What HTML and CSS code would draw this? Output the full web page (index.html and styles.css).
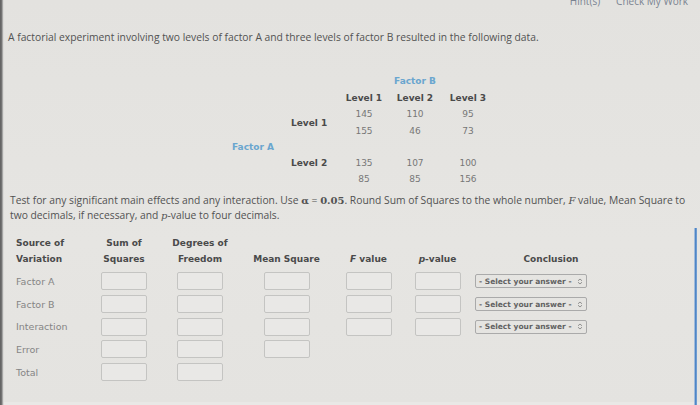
FILE: index.html
```html
<!DOCTYPE html>
<html>
<head>
<meta charset="utf-8">
<link rel="stylesheet" href="styles.css">
</head>
<body>
<div class="page">
  <div class="topbar"><span class="toplink">Hint(s)</span><span class="toplink">Check My Work</span></div>
  <p class="intro">A factorial experiment involving two levels of factor A and three levels of factor B resulted in the following data.</p>

  <div class="data">
    <div class="fb">Factor B</div>
    <div class="lh c3">Level 1</div>
    <div class="lh c4">Level 2</div>
    <div class="lh c5">Level 3</div>

    <div class="rl r1">Level 1</div>
    <div class="num c3 w3">145</div><div class="num c4 w3">110</div><div class="num c5 w3">95</div>
    <div class="num c3 w4">155</div><div class="num c4 w4">46</div><div class="num c5 w4">73</div>

    <div class="fa">Factor A</div>

    <div class="rl r2">Level 2</div>
    <div class="num c3 w6">135</div><div class="num c4 w6">107</div><div class="num c5 w6">100</div>
    <div class="num c3 w7">85</div><div class="num c4 w7">85</div><div class="num c5 w7">156</div>
  </div>

  <p class="instr">Test for any significant main effects and any interaction. Use <span class="m">α</span> = <span class="mb">0.05</span>. Round Sum of Squares to the whole number, <i class="mi">F</i> value, Mean Square to two decimals, if necessary, and <i class="mi">p</i>-value to four decimals.</p>

  <div class="anova">
    <div class="hd left">Source of<br>Variation</div>
    <div class="hd">Sum of<br>Squares</div>
    <div class="hd">Degrees of<br>Freedom</div>
    <div class="hd">Mean Square</div>
    <div class="hd"><i>F</i> value</div>
    <div class="hd"><i>p</i>-value</div>
    <div class="hd">Conclusion</div>

    <div class="lbl">Factor A</div>
    <div class="cell"><span class="box"></span></div>
    <div class="cell"><span class="box"></span></div>
    <div class="cell"><span class="box"></span></div>
    <div class="cell"><span class="box"></span></div>
    <div class="cell"><span class="box"></span></div>
    <div class="cell sel"><span class="select">- Select your answer - <svg width="6" height="7" viewBox="0 0 6 7"><path d="M1 2.8 L3 1 L5 2.8 M1 4.2 L3 6 L5 4.2" fill="none" stroke="#888" stroke-width="0.9"/></svg></span></div>

    <div class="lbl">Factor B</div>
    <div class="cell"><span class="box"></span></div>
    <div class="cell"><span class="box"></span></div>
    <div class="cell"><span class="box"></span></div>
    <div class="cell"><span class="box"></span></div>
    <div class="cell"><span class="box"></span></div>
    <div class="cell sel"><span class="select">- Select your answer - <svg width="6" height="7" viewBox="0 0 6 7"><path d="M1 2.8 L3 1 L5 2.8 M1 4.2 L3 6 L5 4.2" fill="none" stroke="#888" stroke-width="0.9"/></svg></span></div>

    <div class="lbl">Interaction</div>
    <div class="cell"><span class="box"></span></div>
    <div class="cell"><span class="box"></span></div>
    <div class="cell"><span class="box"></span></div>
    <div class="cell"><span class="box"></span></div>
    <div class="cell"><span class="box"></span></div>
    <div class="cell sel"><span class="select">- Select your answer - <svg width="6" height="7" viewBox="0 0 6 7"><path d="M1 2.8 L3 1 L5 2.8 M1 4.2 L3 6 L5 4.2" fill="none" stroke="#888" stroke-width="0.9"/></svg></span></div>

    <div class="lbl">Error</div>
    <div class="cell"><span class="box"></span></div>
    <div class="cell"><span class="box"></span></div>
    <div class="cell"><span class="box"></span></div>
    <div class="cell"></div><div class="cell"></div><div class="cell"></div>

    <div class="lbl">Total</div>
    <div class="cell"><span class="box"></span></div>
    <div class="cell"><span class="box"></span></div>
    <div class="cell"></div><div class="cell"></div><div class="cell"></div><div class="cell"></div>
  </div>
</div>
</body>
</html>
```

FILE: styles.css
```css
html, body {
  margin: 0;
  padding: 0;
  width: 700px;
  height: 405px;
  overflow: hidden;
}
body {
  background:
    linear-gradient(90deg, #5e5e5e 0, #7a7a7a 2px, #d0d0ce 3px, #e4e3e0 4px) no-repeat 0 0 / 4px 405px,
    linear-gradient(90deg, #c9d6e6, #4f86c6, #7ea6d6) no-repeat 694px 228px / 3px 177px,
    linear-gradient(#e9e8e6, #e9e8e6) no-repeat 0 402px / 700px 3px,
    linear-gradient(180deg, #e3e2df 0%, #e6e5e2 60%, #e4e3e0 100%);
  font-family: "DejaVu Sans", Verdana, sans-serif;
  color: #555;
}
.page {
  display: flex;
  flex-direction: column;
  height: 405px;
}
.topbar {
  display: flex;
  justify-content: flex-end;
  gap: 16px;
  height: 6px;
  margin-top: -4px;
  padding-right: 12px;
  font-family: "Open Sans", sans-serif;
  font-size: 10px;
  line-height: 10px;
  color: #7a8391;
}
.intro {
  margin: 28px 0 0 8px;
  font-family: "Open Sans", sans-serif;
  font-size: 10.3px;
  line-height: 14px;
  color: #525252;
}
.data {
  display: grid;
  margin: 29px 0 0 232px;
  grid-template-columns: 56px 52px 48px 54px 52px;
  grid-template-rows: 16.5px 16.5px 16.5px 16.5px 15.5px 16.5px 16.5px;
  align-items: center;
  font-size: 9px;
}
.fb {
  grid-column: 4;
  grid-row: 1;
  text-align: center;
  font-weight: bold;
  color: #6aa6cf;
}
.fa {
  grid-column: 1;
  grid-row: 5;
  font-weight: bold;
  color: #6aa6cf;
}
.lh {
  grid-row: 2;
  text-align: center;
  font-weight: bold;
  color: #4a4a4a;
}
.rl {
  grid-column: 2;
  padding-left: 3px;
  font-weight: bold;
  color: #4a4a4a;
}
.r1 { grid-row: 3 / span 2; }
.r2 { grid-row: 6; }
.w3 { grid-row: 3; }
.w4 { grid-row: 4; }
.w6 { grid-row: 6; }
.w7 { grid-row: 7; }
.c3 { grid-column: 3; }
.c4 { grid-column: 4; }
.c5 { grid-column: 5; }
.num {
  text-align: center;
  color: #777;
}
.instr {
  margin: 5px 0 0 10px;
  width: 680px;
  font-family: "Open Sans", sans-serif;
  font-size: 10.3px;
  line-height: 15.5px;
  color: #525252;
}
.m, .mb {
  font-family: "DejaVu Serif", serif;
  font-weight: bold;
  font-size: 10px;
  line-height: 10px;
}
.mi {
  font-family: "DejaVu Serif", serif;
  font-size: 10px;
  line-height: 10px;
}
.anova {
  display: grid;
  margin: 14px 0 0 16px;
  grid-template-columns: 76px 64px 88px 85px 79px 59px 168px;
  grid-template-rows: 32.5px repeat(5, 22.7px);
  align-items: center;
}
.hd {
  font-size: 9px;
  line-height: 16px;
  padding-bottom: 3px;
  font-weight: bold;
  color: #4a4a4a;
  text-align: center;
  align-self: end;
}
.hd.left { text-align: left; }
.lbl {
  font-size: 9.5px;
  color: #858585;
}
.cell {
  display: flex;
  justify-content: center;
  align-items: center;
}
.cell.sel {
  justify-content: flex-start;
  padding-left: 8px;
}
.box {
  display: block;
  width: 44px;
  height: 16px;
  border: 1px solid #c4c4c2;
  border-radius: 2px;
  background: #e9e8e6;
}
.select {
  display: flex;
  align-items: center;
  justify-content: space-between;
  box-sizing: border-box;
  width: 112px;
  height: 14px;
  padding: 0 3px 0 3px;
  border: 1px solid #aaa;
  border-radius: 2px;
  font-size: 7.5px;
  font-weight: bold;
  color: #626262;
  white-space: nowrap;
}
.select svg { flex: none; }
```
